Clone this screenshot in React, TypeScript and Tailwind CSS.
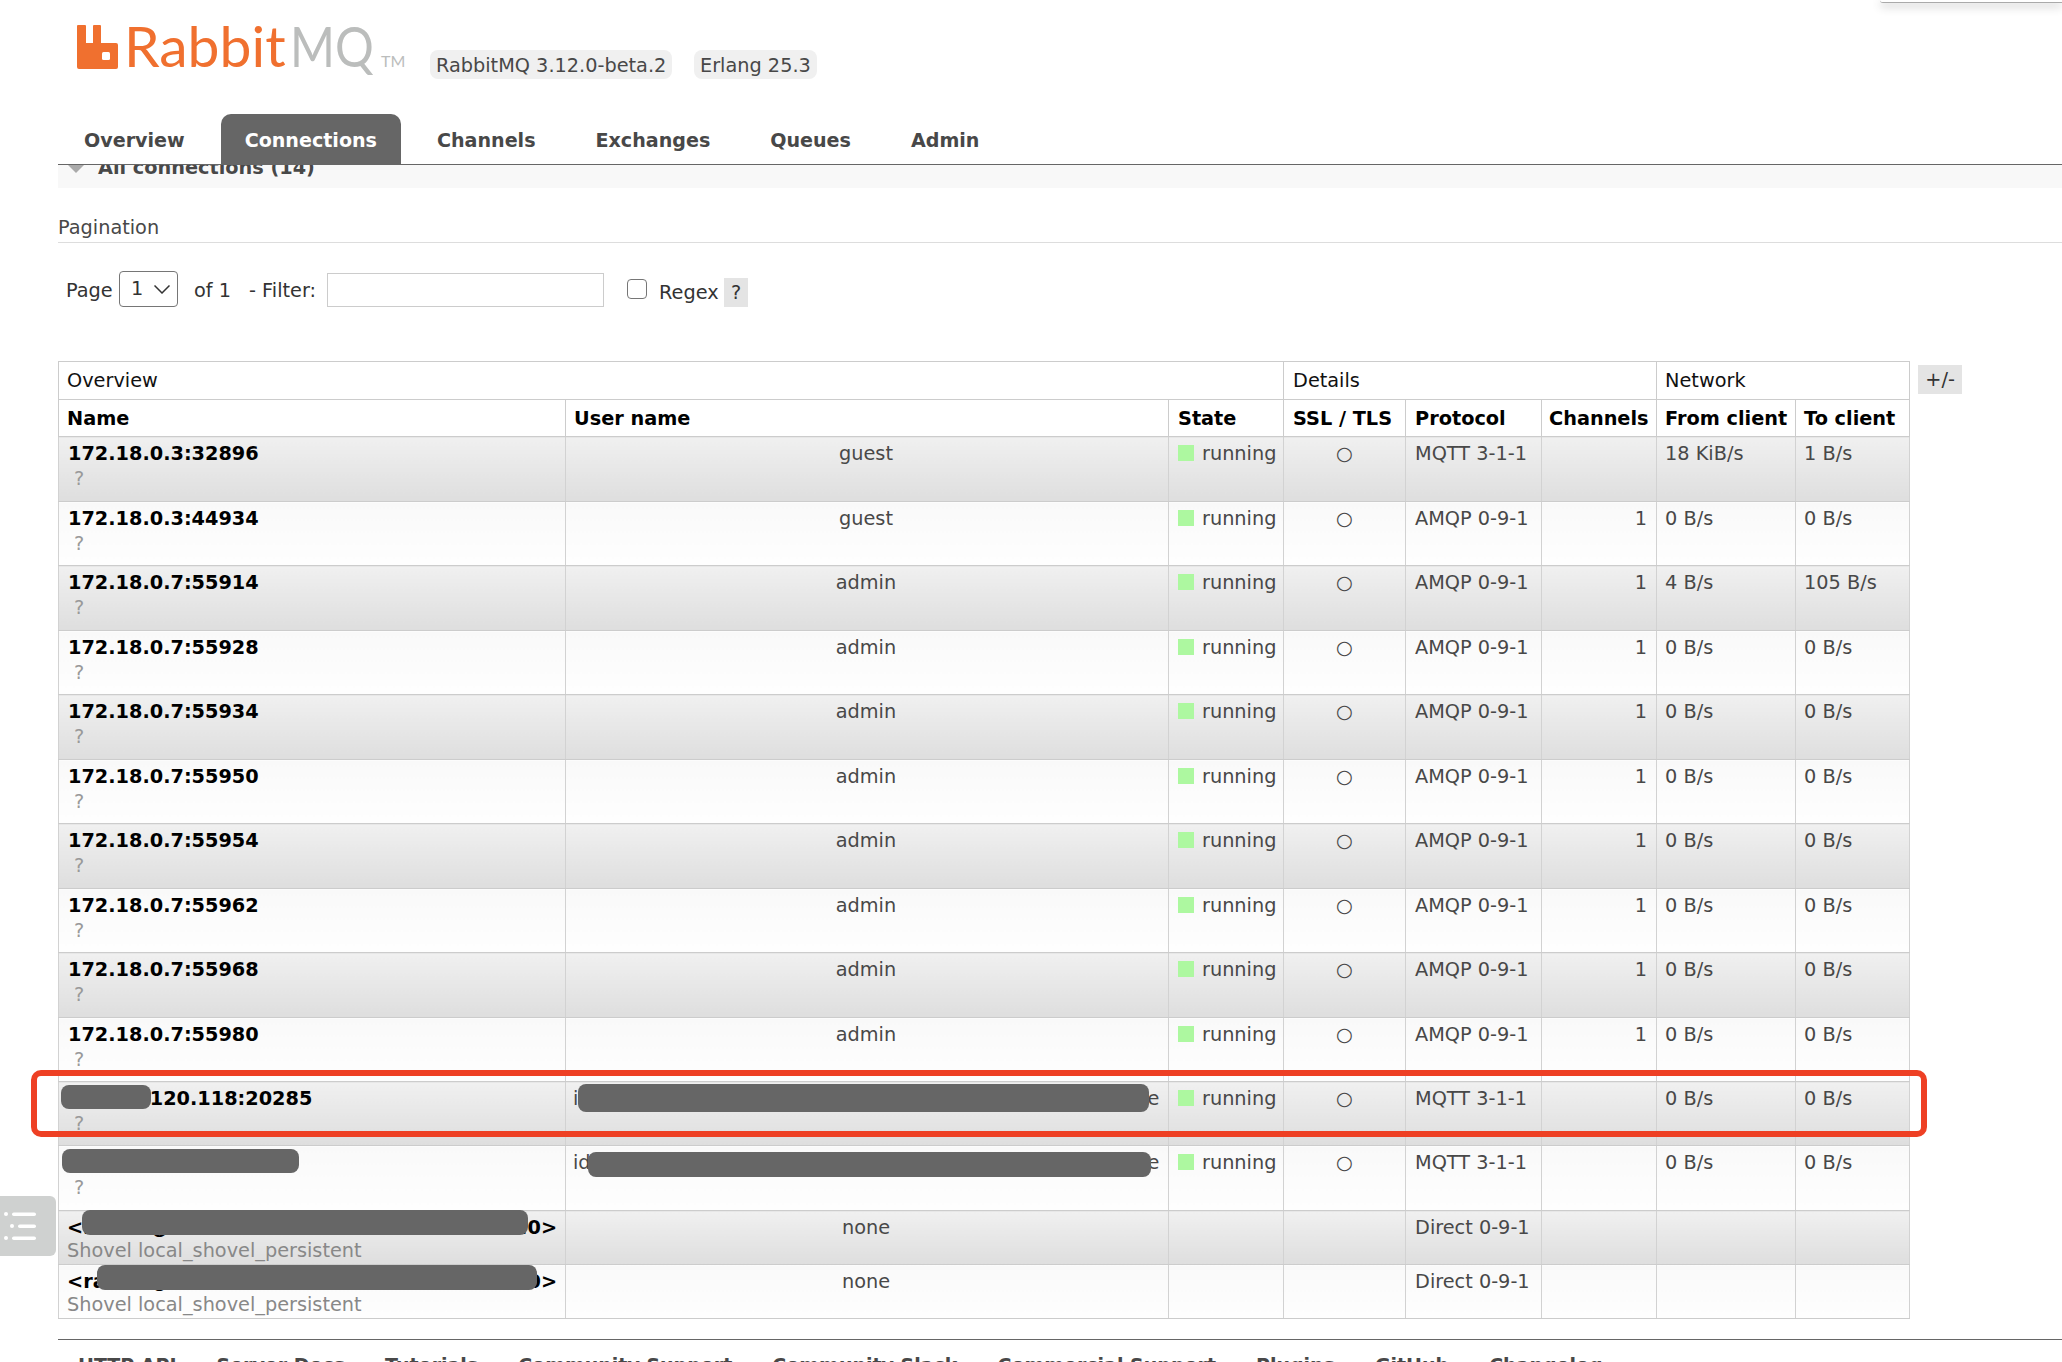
const TABS = ["Overview", "Connections", "Channels", "Exchanges", "Queues", "Admin"];
const FOOTER = [
  "HTTP API",
  "Server Docs",
  "Tutorials",
  "Community Support",
  "Community Slack",
  "Commercial Support",
  "Plugins",
  "GitHub",
  "Changelog",
];

type Conn = {
  name: string;
  user: string;
  h: string;
  note?: string;
  running?: boolean;
  protocol: string;
  channels?: string;
  from?: string;
  to?: string;
  nameBar?: string;
  userBar?: string;
};

function peer(name: string, user: string, h: string, from: string, to: string): Conn {
  return { name, user, h, running: true, protocol: "AMQP 0-9-1", channels: "1", from, to };
}

const ROWS: Conn[] = [
  { name: "172.18.0.3:32896", user: "guest", h: "h-[65px]", running: true, protocol: "MQTT 3-1-1", from: "18 KiB/s", to: "1 B/s" },
  peer("172.18.0.3:44934", "guest", "h-[64px]", "0 B/s", "0 B/s"),
  peer("172.18.0.7:55914", "admin", "h-[65px]", "4 B/s", "105 B/s"),
  peer("172.18.0.7:55928", "admin", "h-[64px]", "0 B/s", "0 B/s"),
  peer("172.18.0.7:55934", "admin", "h-[65px]", "0 B/s", "0 B/s"),
  peer("172.18.0.7:55950", "admin", "h-[64px]", "0 B/s", "0 B/s"),
  peer("172.18.0.7:55954", "admin", "h-[65px]", "0 B/s", "0 B/s"),
  peer("172.18.0.7:55962", "admin", "h-[64px]", "0 B/s", "0 B/s"),
  peer("172.18.0.7:55968", "admin", "h-[65px]", "0 B/s", "0 B/s"),
  peer("172.18.0.7:55980", "admin", "h-[64px]", "0 B/s", "0 B/s"),
  {
    name: "000.00.120.118:20285",
    user: "id-0000000000-0000-0000-0000-00000000000000000000-e",
    h: "h-[64px]",
    running: true,
    protocol: "MQTT 3-1-1",
    from: "0 B/s",
    to: "0 B/s",
    nameBar: "left-[2px] top-[3px] w-[90px] h-[24px]",
    userBar: "left-[12px] top-[2px] w-[571px] h-[28px]",
  },
  {
    name: "000.00.000.00:00000",
    user: "id-0000000000-0000-0000-0000-00000000000000000000-e",
    h: "h-[65px]",
    running: true,
    protocol: "MQTT 3-1-1",
    from: "0 B/s",
    to: "0 B/s",
    nameBar: "left-[3px] top-[3px] w-[237px] h-[24px]",
    userBar: "left-[22px] top-[6px] w-[563px] h-[25px]",
  },
  {
    name: "<rabbit@local-00000000000000000.0000.0>",
    user: "none",
    h: "h-[53px]",
    note: "Shovel local_shovel_persistent",
    protocol: "Direct 0-9-1",
    nameBar: "left-[23px] -top-[1px] w-[446px] h-[25px]",
  },
  {
    name: "<rabbit@local-00000000000000000.0000.0>",
    user: "none",
    h: "h-[54px]",
    note: "Shovel local_shovel_persistent",
    protocol: "Direct 0-9-1",
    nameBar: "left-[38px] top-0 w-[440px] h-[25px]",
  },
];

function Bar({ at }: { at: string }) {
  return <div className={`absolute rounded-[8px] bg-[#666] ${at}`} />;
}

function Logo() {
  return (
    <div className="flex items-start">
      <svg width="41" height="44" viewBox="0 0 41 44" className="mt-[25px] shrink-0">
        <path
          fill="#f0702f"
          d="M1 0h7a1 1 0 0 1 1 1v17h7V1a1 1 0 0 1 1-1h6a1 1 0 0 1 1 1v17h15a2 2 0 0 1 2 2v22a2 2 0 0 1-2 2H2a2 2 0 0 1-2-2V1a1 1 0 0 1 1-1z"
        />
        <rect x="25" y="27" width="8" height="8" rx="1.5" fill="#fff" />
      </svg>
      <div className="ml-[6px] mt-[13px] flex items-baseline whitespace-nowrap [font-family:Lato,sans-serif] text-[57px] leading-[64px] font-normal">
        <span className="w-[166px] origin-left text-[#f0702f]">Rabbit</span>
        <span className="w-[91px] origin-left scale-x-[0.85] text-[#bbbdbc]">MQ</span>
        <span className="text-[16px] leading-none text-[#bbbdbc]">TM</span>
      </div>
    </div>
  );
}

export default function App() {
  const th = "border border-[#ccc] pt-px pr-[9px] text-left align-middle whitespace-nowrap";
  const td = "border border-[#d2d2d2] border-y-[#ccc] pt-[4px] align-top whitespace-nowrap";

  return (
    <div className="relative h-[1362px] overflow-hidden bg-white text-[19.3px] leading-[26px] text-[#484848] [font-family:'DejaVu_Sans',Verdana,sans-serif]">
      {/* stray popover edge, top right */}
      <div className="absolute top-0 right-0 h-[3px] w-[182px] rounded-bl-[4px] border-b border-[#aaa] bg-white shadow-[0_3px_10px_rgba(0,0,0,0.3)]" />

      <header className="relative h-[165px]">
        <div className="flex h-[114px] items-start pl-[77px]">
          <Logo />
          <span className="absolute left-[430px] top-[50px] h-[29px] rounded-[8px] bg-[#f0f0f0] px-[6px] leading-[31px] whitespace-nowrap">
            RabbitMQ 3.12.0-beta.2
          </span>
          <span className="absolute left-[694px] top-[50px] h-[29px] rounded-[8px] bg-[#f0f0f0] px-[6px] leading-[31px] whitespace-nowrap">
            Erlang 25.3
          </span>
        </div>
        <nav className="ml-[58px] flex h-[51px] gap-3 border-b border-[#666] pl-[2px] text-[19.1px] font-bold">
          {TABS.map((t) => (
            <span
              key={t}
              className={
                t === "Connections"
                  ? "h-[50px] rounded-t-[10px] bg-[#666] px-6 leading-[53px] text-white"
                  : "h-[50px] px-6 leading-[53px]"
              }
            >
              {t}
            </span>
          ))}
        </nav>
      </header>

      <main className="pl-[58px]">
        <div className="flex h-[23px] overflow-hidden bg-[#f8f8f8]">
          <svg width="16" height="8" viewBox="0 0 16 8" className="ml-[10px] shrink-0">
            <polygon points="0,0 16,0 8,8" fill="#aaa" />
          </svg>
          <h2 className="ml-[14px] -mt-[10px] font-bold whitespace-nowrap">All connections (14)</h2>
        </div>

        <div className="mt-[27px] h-[28px] border-b border-[#ddd] leading-[26px]">Pagination</div>

        <div className="mt-[28px] flex h-[36px] items-start pl-[8px] text-[#333]">
          <span className="mt-[2px] w-[53px] leading-[36px]">Page</span>
          <div className="relative h-[36px] w-[59px]">
            <select className="h-full w-full appearance-none rounded-[4px] border border-[#767676] bg-white pl-[11px] outline-none">
              <option>1</option>
            </select>
            <svg width="16" height="9" viewBox="0 0 16 9" className="pointer-events-none absolute left-[35px] top-[14px]">
              <polyline points="0.5,0.5 8,8 15.5,0.5" fill="none" stroke="#333" strokeWidth="1.5" />
            </svg>
          </div>
          <span className="mt-[2px] ml-[16px] w-[55px] leading-[36px]">of 1</span>
          <span className="mt-[2px] w-[78px] leading-[36px]">- Filter:</span>
          <input type="text" className="mt-[2px] h-[34px] w-[277px] border border-[#ccc] bg-white" />
          <input type="checkbox" className="mt-[8px] ml-[23px] h-[20px] w-[20px] appearance-none rounded-[4px] border border-[#767676] bg-white" />
          <span className="mt-[9px] ml-[12px] w-[65px]">Regex</span>
          <span className="mt-[7px] h-[29px] w-[24px] bg-[#e4e4e4] text-center leading-[29px]">?</span>
        </div>

        <div className="mt-[54px] flex items-start">
          <table className="w-[1851px] table-fixed border-collapse">
            <colgroup>
              <col className="w-[507px]" />
              <col className="w-[603px]" />
              <col className="w-[115px]" />
              <col className="w-[122px]" />
              <col className="w-[136px]" />
              <col className="w-[115px]" />
              <col className="w-[139px]" />
              <col className="w-[114px]" />
            </colgroup>
            <thead className="text-[#111]">
              <tr className="h-[38px]">
                <th colSpan={3} className={`${th} pl-[8px] font-normal`}>Overview</th>
                <th colSpan={3} className={`${th} pl-[9px] font-normal`}>Details</th>
                <th colSpan={2} className={`${th} pl-[8px] font-normal`}>Network</th>
              </tr>
              <tr className="h-[37px] text-black">
                <th className={`${th} pl-[8px]`}>Name</th>
                <th className={`${th} pl-[8px]`}>User name</th>
                <th className={`${th} pl-[9px]`}>State</th>
                <th className={`${th} pl-[9px]`}>SSL / TLS</th>
                <th className={`${th} pl-[9px]`}>Protocol</th>
                <th className={`${th} pl-[7px]`}>Channels</th>
                <th className={`${th} pl-[8px]`}>From client</th>
                <th className={`${th} pl-[8px]`}>To client</th>
              </tr>
            </thead>
            <tbody>
              {ROWS.map((r, i) => {
                const bg = i % 2 === 0 ? "bg-linear-to-b from-[#f0f0f0] to-[#dedede]" : "bg-linear-to-b from-[#f9f9f9] to-[#fefefe]";
                return (
                  <tr key={i} className={r.h}>
                    <td className={`${td} ${bg} relative px-[9px]`}>
                      <div className={r.note ? "-ml-px font-bold tracking-[0.1px] text-black" : "font-bold text-black"}>{r.name}</div>
                      {r.note ? (
                        <div className="-mt-[3px] -ml-px text-[#888]">{r.note}</div>
                      ) : (
                        <div className="-mt-px pl-[6px] text-[#999]">?</div>
                      )}
                      {r.nameBar && <Bar at={r.nameBar} />}
                    </td>
                    <td className={`${td} ${bg} relative pr-[9px] pl-[7px] text-center`}>
                      {r.user}
                      {r.userBar && <Bar at={r.userBar} />}
                    </td>
                    <td className={`${td} ${bg} px-[9px]`}>
                      {r.running && (
                        <div className="flex items-start">
                          <span className="mt-[4px] h-[16px] w-[16px] shrink-0 bg-[#adf8a0]" />
                          <span className="ml-[8px]">running</span>
                        </div>
                      )}
                    </td>
                    <td className={`${td} ${bg} px-[9px] text-center`}>{r.running && "○"}</td>
                    <td className={`${td} ${bg} px-[9px]`}>{r.protocol}</td>
                    <td className={`${td} ${bg} px-[9px] text-right`}>{r.channels}</td>
                    <td className={`${td} ${bg} pr-[9px] pl-[8px]`}>{r.from}</td>
                    <td className={`${td} ${bg} pr-[9px] pl-[8px]`}>{r.to}</td>
                  </tr>
                );
              })}
            </tbody>
          </table>
          <span className="mt-[4px] ml-[8px] h-[29px] w-[44px] bg-[#e4e4e4] text-center leading-[29px] text-[#333]">+/-</span>
        </div>

        <footer className="mt-[20px] flex gap-[40px] border-t border-[#666] pt-[12px] pl-[20px] text-[19px] font-bold whitespace-nowrap">
          {FOOTER.map((f) => (
            <span key={f}>{f}</span>
          ))}
        </footer>
      </main>

      {/* side handle */}
      <div className="absolute top-[1196px] left-0 flex h-[60px] w-[56px] items-center rounded-r-[6px] bg-[#cfd1d0]">
        <svg width="40" height="32" viewBox="0 0 40 32" className="ml-[4px]">
          <g fill="#fff">
            <circle cx="2" cy="4" r="2" />
            <rect x="8" y="2.5" width="24" height="3.5" rx="1.75" />
            <circle cx="8" cy="16" r="2" />
            <rect x="14" y="14.5" width="18" height="3.5" rx="1.75" />
            <circle cx="2" cy="28" r="2" />
            <rect x="8" y="26.5" width="24" height="3.5" rx="1.75" />
          </g>
        </svg>
      </div>

      {/* red annotation around the highlighted connection */}
      <div className="pointer-events-none absolute top-[1070px] left-[31px] h-[67px] w-[1896px] rounded-[10px] border-[6px] border-[#ee4024]" />
    </div>
  );
}
